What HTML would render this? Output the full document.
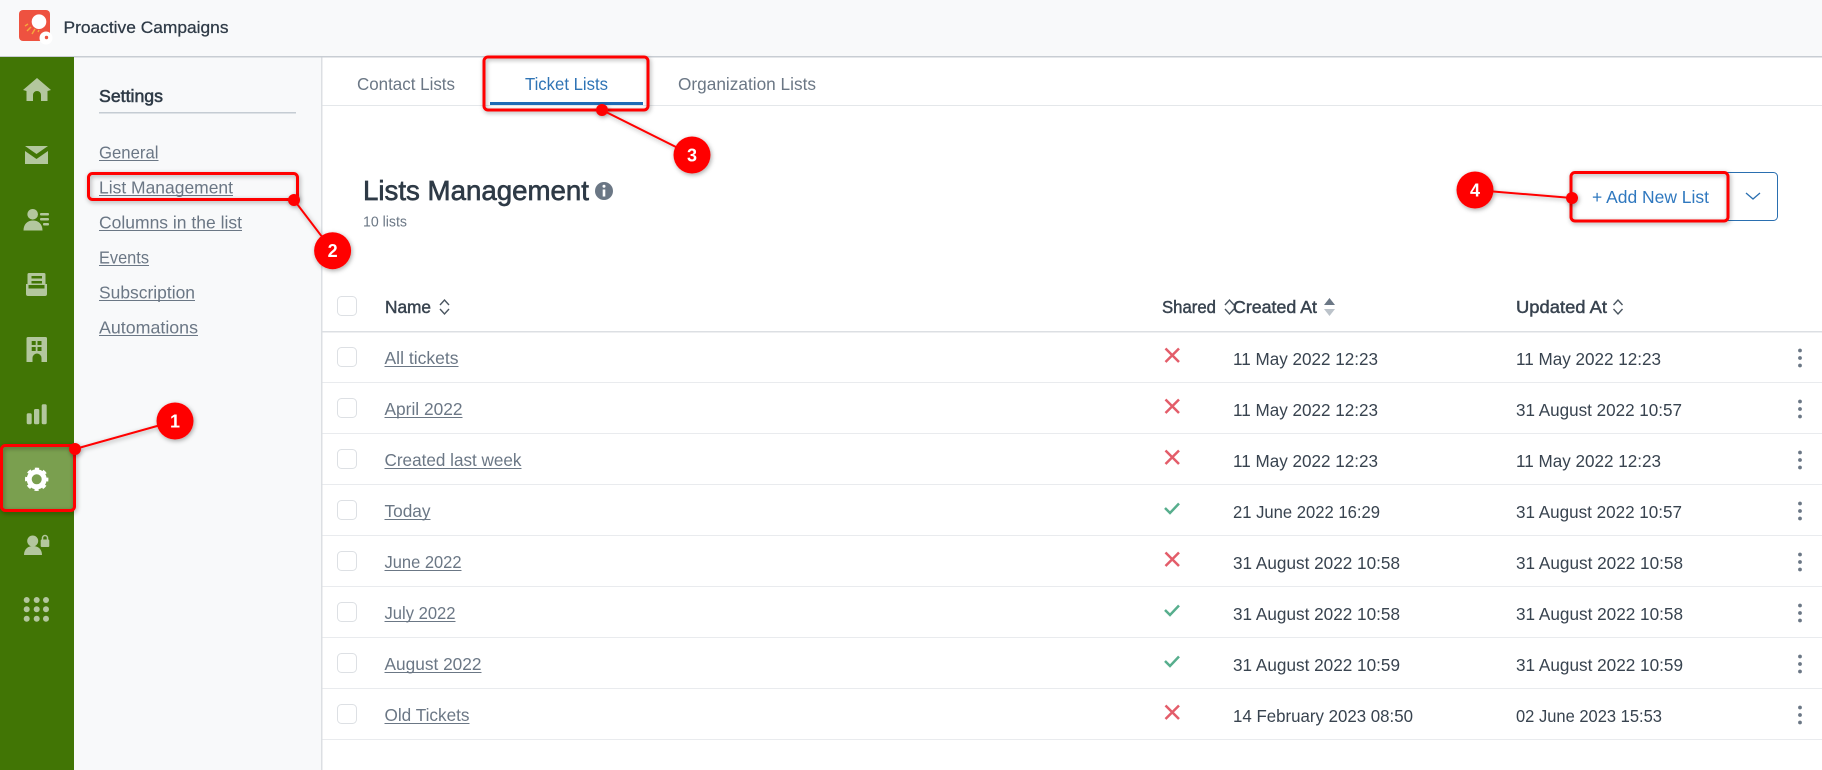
<!DOCTYPE html>
<html lang="en">
<head>
<meta charset="utf-8">
<title>Proactive Campaigns - Lists Management</title>
<style>
html,body{margin:0;padding:0;background:#fff;width:1822px;height:770px;overflow:hidden}
svg{display:block}
text{font-family:"Liberation Sans",sans-serif;white-space:pre}
.b{font-size:17.5px;fill:#38434f}
.l{font-size:17.5px;fill:#6b7785}
.h{font-size:17.5px;fill:#38434f;stroke:#38434f;stroke-width:.45px}
.n{font-size:18px;font-weight:bold;fill:#fff;text-anchor:middle}
.ic{fill:#b3c79e}
.so{fill:none;stroke:#4a5560;stroke-width:1.4}
</style>
</head>
<body>
<svg width="1822" height="770" viewBox="0 0 1822 770" xmlns="http://www.w3.org/2000/svg">
<defs>
<filter id="s" x="-20%" y="-20%" width="140%" height="140%"><feDropShadow dx="1" dy="1.5" stdDeviation="2.5" flood-color="#000" flood-opacity=".35"/></filter>
</defs>
<rect width="1822" height="770" fill="#fff"/>
<!-- top bar -->
<rect width="1822" height="56" fill="#f8f9fa"/>
<rect y="56" width="1822" height="1.5" fill="#c8cdd3"/>
<rect x="19" y="10" width="31" height="31" rx="4" fill="#ee5240"/>
<circle cx="39" cy="21.7" r="7.300" fill="#fff"/>
<path d="M25 26l3-2M27 31l4-4M32 34l3-5M38 32l1-2" stroke="#f6a83c" stroke-width="1.400" fill="none"/>
<circle cx="46" cy="38" r="6.500" fill="#fff"/>
<circle cx="46.500" cy="37.500" r="1.700" fill="#ee5240"/>
<text x="63.500" y="33" class="b" style="font-size:17px;fill:#2e3a46;stroke:#2e3a46;stroke-width:.25px" textLength="165" lengthAdjust="spacingAndGlyphs">Proactive Campaigns</text>

<!-- icon rail -->
<rect y="57" width="74" height="713" fill="#417505"/>
<path class="ic" d="M37 78L51 90 47.500 91V101H41V95a4 4 0 0 0-8 0V101H26.500V91L23 90Z"/>
<path class="ic" d="M25 146H48L36.500 154ZM25 151L36.500 159 48 151V164H25Z"/>
<circle class="ic" cx="32.700" cy="214.300" r="5.300"/>
<path class="ic" d="M23.500 230.500c0-6.500 4-10 9.500-10s9.500 3.500 9.500 10Z"/>
<rect class="ic" x="40" y="213" width="9" height="2.500" rx="1"/><rect class="ic" x="40" y="218" width="9" height="2.500" rx="1"/><rect class="ic" x="43" y="223" width="6" height="2.500" rx="1"/>
<path class="ic" fill-rule="evenodd" d="M29 273H44a1.500 1.500 0 0 1 1.500 1.500V285H27.500V274.500A1.500 1.500 0 0 1 29 273ZM31.500 276v2.500H42V276ZM31.500 281v2.500H42V281Z"/>
<path class="ic" d="M26 284H28.500V288.500H44.500V284H47V294a2 2 0 0 1-2 2H28a2 2 0 0 1-2-2Z"/>
<path class="ic" fill-rule="evenodd" d="M28 337H45.500a1.500 1.500 0 0 1 1.500 1.500V362H41.500V358a4.500 4.500 0 0 0-9 0V362H26.500V338.500A1.500 1.500 0 0 1 28 337ZM31.700 341v4h4v-4ZM37.500 341v4h4v-4ZM31.700 347v4h4v-4ZM37.500 347v4h4v-4Z"/>
<rect class="ic" x="26.700" y="413.300" width="5" height="11" rx="1.500"/><rect class="ic" x="34" y="409" width="5.300" height="15.300" rx="1.500"/><rect class="ic" x="41.700" y="404.300" width="5" height="20" rx="1.500"/>
<rect x="2" y="447" width="72" height="62" fill="#7a9f4f"/>
<circle cx="36.700" cy="479.300" r="7.500" fill="none" stroke="#fff" stroke-width="5"/>
<circle cx="36.700" cy="479.300" r="10" fill="none" stroke="#fff" stroke-width="3.400" stroke-dasharray="4 3.850" stroke-dashoffset="2"/>
<circle class="ic" cx="32.700" cy="541" r="5.500"/>
<path class="ic" d="M24 555c0-6 4-9 9-9s9 3 9 9Z"/>
<rect class="ic" x="40.700" y="539.500" width="8.600" height="7.500" rx="1"/>
<path d="M42.500 540v-2a2.500 2.500 0 0 1 5 0v2" fill="none" stroke="#b3c79e" stroke-width="1.500"/>
<g class="ic"><circle cx="26.700" cy="600" r="3"/><circle cx="36.700" cy="600" r="3"/><circle cx="46" cy="600" r="3"/><circle cx="26.700" cy="609.300" r="3"/><circle cx="36.700" cy="609.300" r="3"/><circle cx="46" cy="609.300" r="3"/><circle cx="26.700" cy="618.700" r="3"/><circle cx="36.700" cy="618.700" r="3"/><circle cx="46" cy="618.700" r="3"/></g>

<!-- secondary sidebar -->
<rect x="74" y="57.500" width="247" height="713" fill="#f8f9fa"/>
<rect x="321" y="57.500" width="1.500" height="713" fill="#dcdfe3"/>
<text x="99" y="102" class="h" style="fill:#2e3a46;stroke:#2e3a46;stroke-width:.55px" textLength="64" lengthAdjust="spacingAndGlyphs">Settings</text>
<rect x="99" y="112" width="197" height="1.500" fill="#c5ccd3"/>
<text x="99" y="158.500" class="l" textLength="59.500" lengthAdjust="spacingAndGlyphs">General</text><rect x="99" y="160" width="59.500" height="1" fill="#6b7785"/>
<text x="99" y="193.500" class="l" textLength="134" lengthAdjust="spacingAndGlyphs">List Management</text><rect x="99" y="195" width="134" height="1" fill="#6b7785"/>
<text x="99" y="228.500" class="l" textLength="143" lengthAdjust="spacingAndGlyphs">Columns in the list</text><rect x="99" y="230" width="143" height="1" fill="#6b7785"/>
<text x="99" y="263.500" class="l" textLength="50" lengthAdjust="spacingAndGlyphs">Events</text><rect x="99" y="265" width="50" height="1" fill="#6b7785"/>
<text x="99" y="298.500" class="l" textLength="96" lengthAdjust="spacingAndGlyphs">Subscription</text><rect x="99" y="300" width="96" height="1" fill="#6b7785"/>
<text x="99" y="333.500" class="l" textLength="99" lengthAdjust="spacingAndGlyphs">Automations</text><rect x="99" y="335" width="99" height="1" fill="#6b7785"/>

<!-- tabs -->
<rect x="322.500" y="105" width="1500" height="1" fill="#e4e7ea"/>
<text x="357" y="90" class="l" textLength="98" lengthAdjust="spacingAndGlyphs">Contact Lists</text>
<text x="525" y="90" class="l" style="fill:#2f74b5" textLength="83" lengthAdjust="spacingAndGlyphs">Ticket Lists</text>
<rect x="490" y="102" width="153" height="3" fill="#1f6bb5"/>
<text x="678" y="90" class="l" textLength="138" lengthAdjust="spacingAndGlyphs">Organization Lists</text>

<!-- heading -->
<text x="363" y="200" style="font-size:27.500px;fill:#2e3a46;stroke:#2e3a46;stroke-width:.65px" textLength="226" lengthAdjust="spacingAndGlyphs">Lists Management</text>
<circle cx="604" cy="191" r="9" fill="#6b7785"/>
<rect x="602.700" y="189.500" width="2.600" height="7" fill="#fff"/><circle cx="604" cy="186.300" r="1.500" fill="#fff"/>
<text x="363" y="226.500" class="l" style="font-size:14.500px" textLength="44" lengthAdjust="spacingAndGlyphs">10 lists</text>

<!-- button -->
<rect x="1570.500" y="172.500" width="207" height="48" rx="4" fill="#fff" stroke="#2a6fb0" stroke-width="1"/>
<text x="1592" y="203" class="l" style="fill:#2f78bf" textLength="117" lengthAdjust="spacingAndGlyphs">+ Add New List</text>
<path d="M1746 193l7 6 7-6" fill="none" stroke="#2a6fb0" stroke-width="1.300"/>

<!-- table header -->
<rect x="337.500" y="296.500" width="19" height="19" rx="4" fill="#fff" stroke="#dde0e4"/>
<text x="385" y="313" class="h" textLength="46" lengthAdjust="spacingAndGlyphs">Name</text>
<path class="so" d="M440 305l4.500-5 4.500 5M440 309l4.500 5 4.500-5"/>
<text x="1162" y="313" class="h" textLength="54" lengthAdjust="spacingAndGlyphs">Shared</text>
<path class="so" d="M1225 305l4.500-5 4.500 5M1225 309l4.500 5 4.500-5"/>
<text x="1233" y="313" class="h" textLength="84" lengthAdjust="spacingAndGlyphs">Created At</text>
<path d="M1324 305l5.500-7 5.500 7Z" fill="#6b7785"/><path d="M1324 309l5.500 7 5.500-7Z" fill="#bcc3ca"/>
<text x="1516" y="313" class="h" textLength="91" lengthAdjust="spacingAndGlyphs">Updated At</text>
<path class="so" d="M1613.500 305l4.500-5 4.500 5M1613.500 309l4.500 5 4.500-5"/>
<rect x="322.500" y="331" width="1500" height="1.500" fill="#dcdfe3"/>

<!-- row 1 -->
<g>
<rect x="337.500" y="347.500" width="19" height="19" rx="4" fill="#fff" stroke="#dde0e4"/>
<text x="384.500" y="364" class="l" textLength="74" lengthAdjust="spacingAndGlyphs">All tickets</text><rect x="384.500" y="366" width="74" height="1" fill="#6b7785"/>
<path d="M1165.500 348.500l13.500 13.500M1179 348.500l-13.500 13.500" stroke="#e35d6a" stroke-width="2.500"/>
<text x="1233" y="365" class="b" textLength="145" lengthAdjust="spacingAndGlyphs">11 May 2022 12:23</text>
<text x="1516" y="365" class="b" textLength="145" lengthAdjust="spacingAndGlyphs">11 May 2022 12:23</text>
<circle cx="1800" cy="350.500" r="1.900" fill="#6b7785"/><circle cx="1800" cy="358" r="1.900" fill="#6b7785"/><circle cx="1800" cy="365.500" r="1.900" fill="#6b7785"/>
<rect x="322.500" y="382" width="1500" height="1" fill="#e9ebee"/>
</g>
<!-- row 2 -->
<g transform="translate(0,51)">
<rect x="337.500" y="347.500" width="19" height="19" rx="4" fill="#fff" stroke="#dde0e4"/>
<text x="384.500" y="364" class="l" textLength="78" lengthAdjust="spacingAndGlyphs">April 2022</text><rect x="384.500" y="366" width="78" height="1" fill="#6b7785"/>
<path d="M1165.500 348.500l13.500 13.500M1179 348.500l-13.500 13.500" stroke="#e35d6a" stroke-width="2.500"/>
<text x="1233" y="365" class="b" textLength="145" lengthAdjust="spacingAndGlyphs">11 May 2022 12:23</text>
<text x="1516" y="365" class="b" textLength="166" lengthAdjust="spacingAndGlyphs">31 August 2022 10:57</text>
<circle cx="1800" cy="350.500" r="1.900" fill="#6b7785"/><circle cx="1800" cy="358" r="1.900" fill="#6b7785"/><circle cx="1800" cy="365.500" r="1.900" fill="#6b7785"/>
<rect x="322.500" y="382" width="1500" height="1" fill="#e9ebee"/>
</g>
<!-- row 3 -->
<g transform="translate(0,102)">
<rect x="337.500" y="347.500" width="19" height="19" rx="4" fill="#fff" stroke="#dde0e4"/>
<text x="384.500" y="364" class="l" textLength="137" lengthAdjust="spacingAndGlyphs">Created last week</text><rect x="384.500" y="366" width="137" height="1" fill="#6b7785"/>
<path d="M1165.500 348.500l13.500 13.500M1179 348.500l-13.500 13.500" stroke="#e35d6a" stroke-width="2.500"/>
<text x="1233" y="365" class="b" textLength="145" lengthAdjust="spacingAndGlyphs">11 May 2022 12:23</text>
<text x="1516" y="365" class="b" textLength="145" lengthAdjust="spacingAndGlyphs">11 May 2022 12:23</text>
<circle cx="1800" cy="350.500" r="1.900" fill="#6b7785"/><circle cx="1800" cy="358" r="1.900" fill="#6b7785"/><circle cx="1800" cy="365.500" r="1.900" fill="#6b7785"/>
<rect x="322.500" y="382" width="1500" height="1" fill="#e9ebee"/>
</g>
<!-- row 4 -->
<g transform="translate(0,153)">
<rect x="337.500" y="347.500" width="19" height="19" rx="4" fill="#fff" stroke="#dde0e4"/>
<text x="384.500" y="364" class="l" textLength="46" lengthAdjust="spacingAndGlyphs">Today</text><rect x="384.500" y="366" width="46" height="1" fill="#6b7785"/>
<path d="M1165 355l5 5 9-9.500" fill="none" stroke="#57ae8d" stroke-width="2.500"/>
<text x="1233" y="365" class="b" textLength="147" lengthAdjust="spacingAndGlyphs">21 June 2022 16:29</text>
<text x="1516" y="365" class="b" textLength="166" lengthAdjust="spacingAndGlyphs">31 August 2022 10:57</text>
<circle cx="1800" cy="350.500" r="1.900" fill="#6b7785"/><circle cx="1800" cy="358" r="1.900" fill="#6b7785"/><circle cx="1800" cy="365.500" r="1.900" fill="#6b7785"/>
<rect x="322.500" y="382" width="1500" height="1" fill="#e9ebee"/>
</g>
<!-- row 5 -->
<g transform="translate(0,204)">
<rect x="337.500" y="347.500" width="19" height="19" rx="4" fill="#fff" stroke="#dde0e4"/>
<text x="384.500" y="364" class="l" textLength="77" lengthAdjust="spacingAndGlyphs">June 2022</text><rect x="384.500" y="366" width="77" height="1" fill="#6b7785"/>
<path d="M1165.500 348.500l13.500 13.500M1179 348.500l-13.500 13.500" stroke="#e35d6a" stroke-width="2.500"/>
<text x="1233" y="365" class="b" textLength="167" lengthAdjust="spacingAndGlyphs">31 August 2022 10:58</text>
<text x="1516" y="365" class="b" textLength="167" lengthAdjust="spacingAndGlyphs">31 August 2022 10:58</text>
<circle cx="1800" cy="350.500" r="1.900" fill="#6b7785"/><circle cx="1800" cy="358" r="1.900" fill="#6b7785"/><circle cx="1800" cy="365.500" r="1.900" fill="#6b7785"/>
<rect x="322.500" y="382" width="1500" height="1" fill="#e9ebee"/>
</g>
<!-- row 6 -->
<g transform="translate(0,255)">
<rect x="337.500" y="347.500" width="19" height="19" rx="4" fill="#fff" stroke="#dde0e4"/>
<text x="384.500" y="364" class="l" textLength="71" lengthAdjust="spacingAndGlyphs">July 2022</text><rect x="384.500" y="366" width="71" height="1" fill="#6b7785"/>
<path d="M1165 355l5 5 9-9.500" fill="none" stroke="#57ae8d" stroke-width="2.500"/>
<text x="1233" y="365" class="b" textLength="167" lengthAdjust="spacingAndGlyphs">31 August 2022 10:58</text>
<text x="1516" y="365" class="b" textLength="167" lengthAdjust="spacingAndGlyphs">31 August 2022 10:58</text>
<circle cx="1800" cy="350.500" r="1.900" fill="#6b7785"/><circle cx="1800" cy="358" r="1.900" fill="#6b7785"/><circle cx="1800" cy="365.500" r="1.900" fill="#6b7785"/>
<rect x="322.500" y="382" width="1500" height="1" fill="#e9ebee"/>
</g>
<!-- row 7 -->
<g transform="translate(0,306)">
<rect x="337.500" y="347.500" width="19" height="19" rx="4" fill="#fff" stroke="#dde0e4"/>
<text x="384.500" y="364" class="l" textLength="97" lengthAdjust="spacingAndGlyphs">August 2022</text><rect x="384.500" y="366" width="97" height="1" fill="#6b7785"/>
<path d="M1165 355l5 5 9-9.500" fill="none" stroke="#57ae8d" stroke-width="2.500"/>
<text x="1233" y="365" class="b" textLength="167" lengthAdjust="spacingAndGlyphs">31 August 2022 10:59</text>
<text x="1516" y="365" class="b" textLength="167" lengthAdjust="spacingAndGlyphs">31 August 2022 10:59</text>
<circle cx="1800" cy="350.500" r="1.900" fill="#6b7785"/><circle cx="1800" cy="358" r="1.900" fill="#6b7785"/><circle cx="1800" cy="365.500" r="1.900" fill="#6b7785"/>
<rect x="322.500" y="382" width="1500" height="1" fill="#e9ebee"/>
</g>
<!-- row 8 -->
<g transform="translate(0,357)">
<rect x="337.500" y="347.500" width="19" height="19" rx="4" fill="#fff" stroke="#dde0e4"/>
<text x="384.500" y="364" class="l" textLength="85" lengthAdjust="spacingAndGlyphs">Old Tickets</text><rect x="384.500" y="366" width="85" height="1" fill="#6b7785"/>
<path d="M1165.500 348.500l13.500 13.500M1179 348.500l-13.500 13.500" stroke="#e35d6a" stroke-width="2.500"/>
<text x="1233" y="365" class="b" textLength="180" lengthAdjust="spacingAndGlyphs">14 February 2023 08:50</text>
<text x="1516" y="365" class="b" textLength="146" lengthAdjust="spacingAndGlyphs">02 June 2023 15:53</text>
<circle cx="1800" cy="350.500" r="1.900" fill="#6b7785"/><circle cx="1800" cy="358" r="1.900" fill="#6b7785"/><circle cx="1800" cy="365.500" r="1.900" fill="#6b7785"/>
<rect x="322.500" y="382" width="1500" height="1" fill="#e9ebee"/>
</g>

<!-- annotations -->
<g filter="url(#s)" fill="none" stroke="#f00" stroke-width="3">
<rect x="1.500" y="445.500" width="73" height="65" rx="4"/>
<rect x="88.500" y="173.500" width="209" height="26" rx="4"/>
<rect x="484" y="57" width="164" height="53" rx="4"/>
<rect x="1571" y="172.500" width="157" height="48.500" rx="4"/>
</g>
<g filter="url(#s)">
<path d="M75 449L175 421" stroke="#f00" stroke-width="2"/>
<path d="M294 200L332.600 250.700" stroke="#f00" stroke-width="2"/>
<path d="M602 110L692 155" stroke="#f00" stroke-width="2"/>
<path d="M1572 198L1475 190" stroke="#f00" stroke-width="2"/>
<circle cx="75" cy="449" r="6" fill="#f00"/>
<circle cx="294" cy="200" r="6" fill="#f00"/>
<circle cx="602" cy="110" r="6" fill="#f00"/>
<circle cx="1572" cy="198" r="6" fill="#f00"/>
<circle cx="175" cy="421" r="18.500" fill="#f00"/>
<circle cx="332.600" cy="250.700" r="18.500" fill="#f00"/>
<circle cx="692" cy="155" r="18.500" fill="#f00"/>
<circle cx="1475" cy="190" r="18.500" fill="#f00"/>
</g>
<text x="175" y="427.500" class="n">1</text>
<text x="332.600" y="257.200" class="n">2</text>
<text x="692" y="161.500" class="n">3</text>
<text x="1475" y="196.500" class="n">4</text>
</svg>
</body>
</html>
